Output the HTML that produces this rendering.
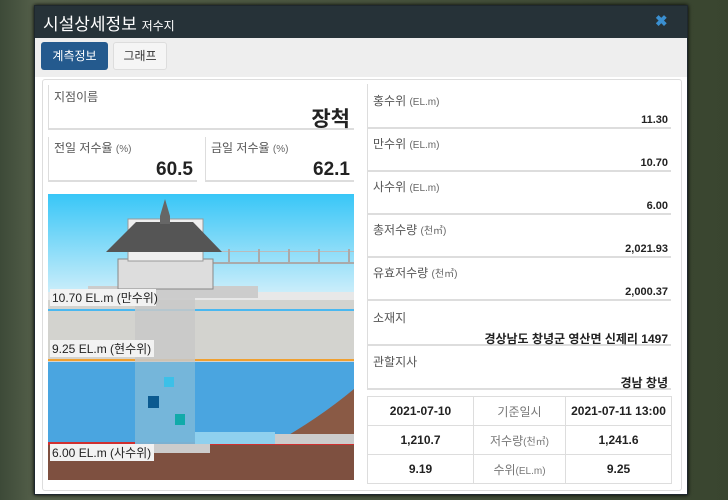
<!DOCTYPE html>
<html><head><meta charset="utf-8"><style>
*{margin:0;padding:0;box-sizing:border-box}
body{width:728px;height:500px;overflow:hidden;position:relative;font-family:"Liberation Sans","Noto Sans CJK KR",sans-serif;background:linear-gradient(90deg,#3d4a38 0%,#55604a 5%,#39452f 100%)}
.a{position:absolute}
.modal{left:34px;top:5px;width:654px;height:490px;background:#fff;border:1px solid #1e272d;box-shadow:0 0 4px #000}
.hdr{left:0;top:0;width:652px;height:32px;background:#263238}
.lbl{color:#555;font-size:12px}
.lbl small{font-size:10px;color:#666}
.val{font-weight:bold;color:#222;text-align:right}
.cell{border-left:1px solid #ddd;border-bottom:2px solid #ddd}
td{border:1px solid #ddd;text-align:center;font-size:12px;font-weight:bold;color:#222;height:29px}
td.m{font-weight:normal;color:#777}
</style></head><body>
<div class="a modal">
 <div class="a hdr">
  <div class="a" style="left:8px;top:4px;color:#fff;font-size:17px">시설상세정보 <span style="font-size:12px">저수지</span></div>
  <div class="a" style="left:620px;top:6px;color:#3a8fd0;font-size:15px;font-weight:bold">✖</div>
 </div>
 <div class="a" style="left:0;top:32px;width:652px;height:39px;background:#eee"></div>
 <div class="a" style="left:6px;top:36px;width:67px;height:28px;background:#245a8e;border-radius:3px;color:#fff;font-size:12px;text-align:center;line-height:28px">계측정보</div>
 <div class="a" style="left:78px;top:36px;width:54px;height:28px;background:#f5f5f5;border:1px solid #ddd;border-radius:3px;color:#333;font-size:12px;text-align:center;line-height:26px">그래프</div>
 <div class="a" style="left:7px;top:73px;width:640px;height:412px;border:1px solid #ddd;border-radius:3px"></div>
</div>
<!-- left -->
<div class="a cell" style="left:48px;top:85px;width:306px;height:45px"><div class="a lbl" style="left:5px;top:3px">지점이름</div><div class="a val" style="right:4px;top:18px;font-size:21px">장척</div></div>
<div class="a cell" style="left:48px;top:137px;width:149px;height:45px"><div class="a lbl" style="left:5px;top:2px">전일 저수율 <small>(%)</small></div><div class="a val" style="right:4px;top:22px;font-size:19px">60.5</div></div>
<div class="a cell" style="left:205px;top:137px;width:149px;height:45px"><div class="a lbl" style="left:5px;top:2px">금일 저수율 <small>(%)</small></div><div class="a val" style="right:4px;top:22px;font-size:19px">62.1</div></div>
<svg class="a" style="left:48px;top:194px" width="306" height="286" viewBox="0 0 306 286">
<defs><linearGradient id="s" x1="0" y1="0" x2="0" y2="1"><stop offset="0" stop-color="#38c6f7"/><stop offset="1" stop-color="#cdeefa"/></linearGradient></defs>
<rect width="306" height="100" fill="url(#s)"/>
<rect y="100" width="306" height="70" fill="#d3d3cf"/>
<rect y="98" width="306" height="8" fill="#e8e8e8"/>
<rect y="168" width="306" height="82" fill="#4aa5e0"/>
<path d="M225 250 Q270 225 306 195 L306 250Z" fill="#8a5a45"/>
<rect y="250" width="306" height="36" fill="#7e5040"/>
<rect y="248" width="306" height="3" fill="#d03030"/>
<rect y="165" width="306" height="2" fill="#f0a030"/>
<rect y="115" width="306" height="2" fill="#4ab8f0"/>
<rect x="100" y="68" width="206" height="2" fill="#aaa"/>
<rect x="100" y="57" width="206" height="1" fill="#bbb"/>
<g fill="#aaa"><rect x="150" y="55" width="2" height="14"/><rect x="180" y="55" width="2" height="14"/><rect x="210" y="55" width="2" height="14"/><rect x="240" y="55" width="2" height="14"/><rect x="270" y="55" width="2" height="14"/><rect x="300" y="55" width="2" height="14"/></g>
<rect x="87" y="100" width="60" height="150" fill="#c8c8c8" opacity=".85"/>
<rect x="87" y="168" width="60" height="82" fill="#5ab0e0" opacity=".7"/>
<rect x="40" y="92" width="170" height="12" fill="#ccc"/>
<rect x="70" y="65" width="95" height="30" fill="#ddd" stroke="#888"/>
<rect x="80" y="25" width="75" height="42" fill="#eee" stroke="#999"/>
<path d="M58 58 L88 28 L145 28 L174 58Z" fill="#555"/>
<path d="M112 22 L117 5 L122 22 Z" fill="#666"/>
<rect x="112" y="22" width="10" height="8" fill="#666"/>
<rect x="149" y="240" width="157" height="10" fill="#ccc"/>
<rect x="147" y="238" width="80" height="12" fill="#8fd0ee"/>
<rect x="100" y="202" width="11" height="12" fill="#0b5a90"/><rect x="127" y="220" width="10" height="11" fill="#1aa"/><rect x="116" y="183" width="10" height="10" fill="#3cc0e8"/>
<rect x="87" y="250" width="75" height="9" fill="#ccc"/>
<g font-family="Liberation Sans,Noto Sans CJK KR,sans-serif" font-size="12" fill="#222">
<rect x="2" y="95" width="106" height="17" fill="#f2f2f2"/><text x="4" y="108">10.70 EL.m (만수위)</text>
<rect x="2" y="146" width="104" height="17" fill="#f2f2f2"/><text x="4" y="159">9.25 EL.m (현수위)</text>
<rect x="2" y="250" width="104" height="17" fill="#f2f2f2"/><text x="4" y="263">6.00 EL.m (사수위)</text>
</g>
</svg>
<!-- right -->
<div class="a cell" style="left:367px;top:84px;width:304px;height:45px"><div class="a lbl" style="left:5px;top:8px">홍수위 <small>(EL.m)</small></div><div class="a val" style="right:3px;top:30px;font-size:11px">11.30</div></div>
<div class="a cell" style="left:367px;top:127px;width:304px;height:45px"><div class="a lbl" style="left:5px;top:8px">만수위 <small>(EL.m)</small></div><div class="a val" style="right:3px;top:30px;font-size:11px">10.70</div></div>
<div class="a cell" style="left:367px;top:170px;width:304px;height:45px"><div class="a lbl" style="left:5px;top:8px">사수위 <small>(EL.m)</small></div><div class="a val" style="right:3px;top:30px;font-size:11px">6.00</div></div>
<div class="a cell" style="left:367px;top:213px;width:304px;height:45px"><div class="a lbl" style="left:5px;top:8px">총저수량 <small>(천㎥)</small></div><div class="a val" style="right:3px;top:30px;font-size:11px">2,021.93</div></div>
<div class="a cell" style="left:367px;top:256px;width:304px;height:45px"><div class="a lbl" style="left:5px;top:8px">유효저수량 <small>(천㎥)</small></div><div class="a val" style="right:3px;top:30px;font-size:11px">2,000.37</div></div>
<div class="a cell" style="left:367px;top:300px;width:304px;height:46px"><div class="a lbl" style="left:5px;top:9px">소재지</div><div class="a val" style="right:3px;top:30px;font-size:12px">경상남도 창녕군 영산면 신제리 1497</div></div>
<div class="a cell" style="left:367px;top:344px;width:304px;height:46px"><div class="a lbl" style="left:5px;top:9px">관할지사</div><div class="a val" style="right:3px;top:30px;font-size:12px">경남 창녕</div></div>
<table class="a" style="left:367px;top:396px;width:305px;border-collapse:collapse">
<tr><td style="width:106px">2021-07-10</td><td class="m" style="width:92px">기준일시</td><td>2021-07-11 13:00</td></tr>
<tr><td>1,210.7</td><td class="m">저수량<small style="font-size:10px">(천㎥)</small></td><td>1,241.6</td></tr>
<tr><td>9.19</td><td class="m">수위<small style="font-size:10px">(EL.m)</small></td><td>9.25</td></tr>
</table>
</body></html>
